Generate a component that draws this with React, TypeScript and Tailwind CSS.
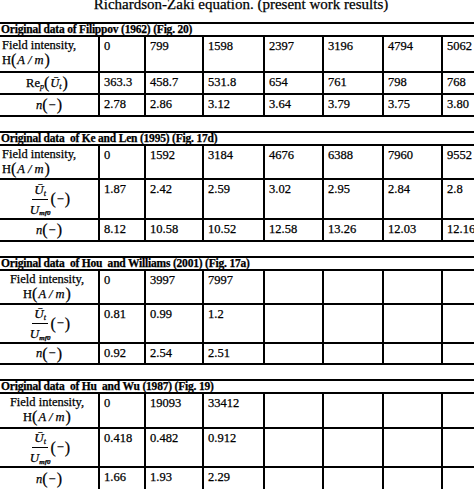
import type { ReactNode } from "react";

// Scanned table: Richardson-Zaki exponent, present work results

type SectionData = {
  title: string;
  center: boolean;
  ratio: "re" | "frac";
  wrap: string;
  heights: [string, string, string];
  field: string[];
  ratioVals: string[];
  nVals: string[];
};

const sections: SectionData[] = [
  {
    title: "Original data of Filippov (1962) (Fig. 20)",
    center: false,
    ratio: "re",
    wrap: "mt-0",
    heights: ["h-[36px]", "h-[22px]", "h-[22px]"],
    field: ["0", "799", "1598", "2397", "3196", "4794", "5062"],
    ratioVals: ["363.3", "458.7", "531.8", "654", "761", "798", "768"],
    nVals: ["2.78", "2.86", "3.12", "3.64", "3.79", "3.75", "3.80"],
  },
  {
    title: "Original data  of Ke and Len (1995) (Fig. 17d)",
    center: false,
    ratio: "frac",
    wrap: "mt-[14px]",
    heights: ["h-[34px]", "h-[40px]", "h-[22px]"],
    field: ["0", "1592", "3184", "4676", "6388", "7960", "9552"],
    ratioVals: ["1.87", "2.42", "2.59", "3.02", "2.95", "2.84", "2.8"],
    nVals: ["8.12", "10.58", "10.52", "12.58", "13.26", "12.03", "12.16"],
  },
  {
    title: "Original data  of Hou  and Williams (2001) (Fig. 17a)",
    center: true,
    ratio: "frac",
    wrap: "mt-[14px]",
    heights: ["h-[34px]", "h-[39px]", "h-[21px]"],
    field: ["0", "3997", "7997", "", "", "", ""],
    ratioVals: ["0.81", "0.99", "1.2", "", "", "", ""],
    nVals: ["0.92", "2.54", "2.51", "", "", "", ""],
  },
  {
    title: "Original data  of Hu  and Wu (1987) (Fig. 19)",
    center: true,
    ratio: "frac",
    wrap: "mt-[14px]",
    heights: ["h-[35px]", "h-[39px]", "h-[24px]"],
    field: ["0", "19093", "33412", "", "", "", ""],
    ratioVals: ["0.418", "0.482", "0.912", "", "", "", ""],
    nVals: ["1.66", "1.93", "2.29", "", "", "", ""],
  },
];

const Paren = ({ children }: { children: ReactNode }) => (
  <span className="inline-flex items-center">
    <span className="text-[16px] leading-none">(</span>
    <span className="px-[1px]">{children}</span>
    <span className="text-[16px] leading-none">)</span>
  </span>
);

const FieldLabel = ({ center }: { center: boolean }) => (
  <div
    className={`flex flex-col pt-[1px] leading-[14px] ${
      center ? "items-center pr-[4px]" : "items-start pl-[2px]"
    }`}
  >
    <span>Field intensity,</span>
    <span className="flex items-center">
      H<Paren><span className="italic">A / m</span></Paren>
    </span>
  </div>
);

const ReLabel = () => (
  <div className="flex h-full items-center justify-center pr-[4px]">
    <span>
      Re<sub className="italic text-[8px]">p</sub>
    </span>
    <Paren>
      <span className="italic">
        Ū<sub className="text-[8px]">t</sub>
      </span>
    </Paren>
  </div>
);

const FracLabel = () => (
  <div className="flex h-full items-center justify-center pl-[2px]">
    <div className="flex flex-col items-center leading-none">
      <span className="border-b-[1.5px] border-black px-[2px] pb-[3px] italic text-[13px]">
        Ū<sub className="text-[8px]">t</sub>
      </span>
      <span className="pt-[3px] italic text-[13px]">
        U<sub className="text-[7px] font-bold">mf0</sub>
      </span>
    </div>
    <Paren>−</Paren>
  </div>
);

const NLabel = () => (
  <div className="flex h-full items-center justify-center">
    <span className="italic">n</span>
    <Paren>−</Paren>
  </div>
);

const Row = ({ h, label, vals }: { h: string; label: ReactNode; vals: string[] }) => (
  <div
    className={`grid grid-cols-[98px_46px_58px_61px_59px_60px_59px_60px] border-b-2 border-black ${h}`}
  >
    <div className="h-full">{label}</div>
    {vals.map((v, i) => (
      <div key={i} className="h-full border-l-2 border-black pl-[4px] pt-[2px] leading-[14px]">
        {v}
      </div>
    ))}
  </div>
);

const Section = ({ s }: { s: SectionData }) => (
  <div className={`border-t-2 border-black ${s.wrap}`}>
    <div className="h-[13px] border-b-2 border-black pl-[1px] text-[11.5px] font-bold leading-[11px] tracking-[-0.2px] whitespace-pre">
      {s.title}
    </div>
    <Row h={s.heights[0]} label={<FieldLabel center={s.center} />} vals={s.field} />
    <Row h={s.heights[1]} label={s.ratio === "re" ? <ReLabel /> : <FracLabel />} vals={s.ratioVals} />
    <Row h={s.heights[2]} label={<NLabel />} vals={s.nVals} />
  </div>
);

export default function App() {
  return (
    <div className="h-[489px] w-[474px] overflow-hidden bg-white font-['Liberation_Serif','Times_New_Roman',serif] text-[12.5px] text-black [-webkit-text-stroke:0.25px_#000]">
      <div className="w-[560px]">
        <div className="-mt-[5px] h-[27px] w-[474px] pl-[8px] text-center text-[15px] leading-[18px]">
          Richardson-Zaki equation. (present work results)
        </div>
        {sections.map((s) => (
          <Section key={s.title} s={s} />
        ))}
      </div>
    </div>
  );
}
